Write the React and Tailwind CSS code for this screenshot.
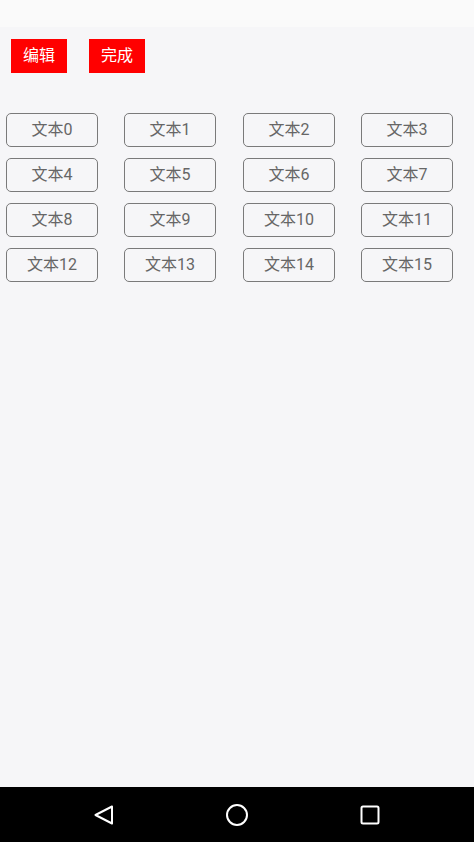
import React from "react";

const font = { fontFamily: '"Roboto", "Noto Sans CJK SC", sans-serif' };

export default function App() {
  const items = Array.from({ length: 16 }, (_, i) => i);
  return (
    <div className="w-[474px] h-[842px] flex flex-col bg-[#f6f6f8] overflow-hidden" style={font}>
      <div className="h-[27px] bg-[#fafafa] shrink-0" />
      <div className="flex-1 flex flex-col">
        <div className="flex pt-[12px] pl-[11px] gap-[22px]">
          <div className="w-[56px] h-[34px] bg-[#ff0000] text-white text-[16px] flex items-center justify-center">编辑</div>
          <div className="w-[56px] h-[34px] bg-[#ff0000] text-white text-[16px] flex items-center justify-center">完成</div>
        </div>
        <div className="grid grid-cols-[118px_119px_118px_119px] gap-y-[11px] mt-[40px]">
          {items.map((i) => (
            <div key={i} className="pl-[6px]">
              <div className="w-[92px] h-[34px] border border-[#7a7a7a] rounded-[5px] flex items-center justify-center text-[16px] text-[#666666]">
                文本{i}
              </div>
            </div>
          ))}
        </div>
      </div>
      <div className="h-[55px] bg-black shrink-0 flex items-center">
        <div className="flex-1 flex justify-center">
          <svg width="474" height="55" viewBox="0 0 474 55" className="block">
            <path d="M112 19.5 L95.5 28 L112 36.5 Z" fill="none" stroke="white" strokeWidth="2" strokeLinejoin="round" />
            <circle cx="237" cy="28" r="10" fill="none" stroke="white" strokeWidth="2" />
            <rect x="361.5" y="19.5" width="17" height="17" rx="1.5" fill="none" stroke="white" strokeWidth="2" />
          </svg>
        </div>
      </div>
    </div>
  );
}
